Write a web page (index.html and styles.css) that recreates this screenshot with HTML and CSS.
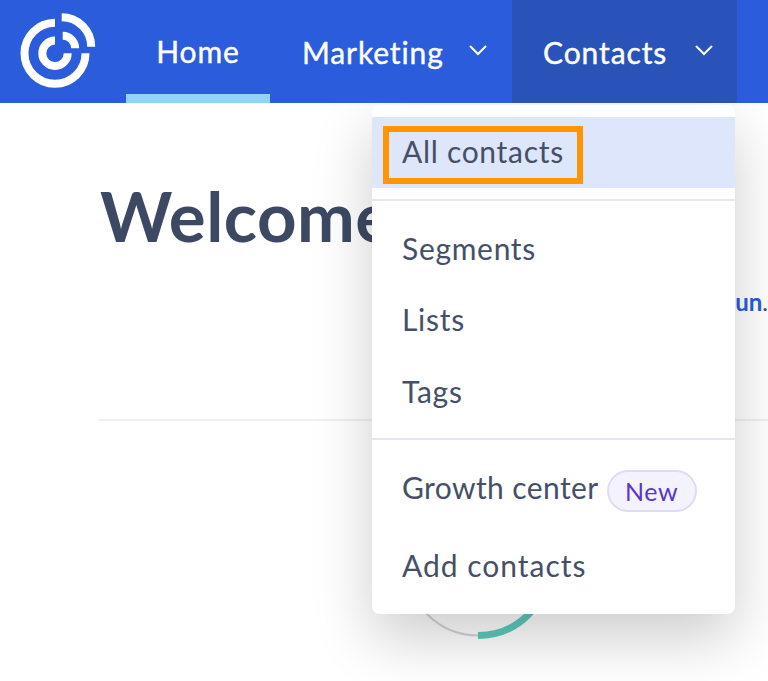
FILE: index.html
```html
<!DOCTYPE html>
<html lang="en">
<head>
    <meta charset="UTF-8">
    <meta name="viewport" content="width=device-width, initial-scale=1.0">
    <title>Welcome</title>
    <link rel="stylesheet" href="styles.css">
</head>
<body>
    <header class="topbar">
        <a class="logo" href="#">
            <svg width="78" height="78" viewBox="0 0 78 78" fill="none" stroke="#fff" stroke-width="8">
                <path d="M36 10.8 A30.5 30.5 0 1 0 66.5 41.3"/>
                <path d="M42.7 5.2 A29.5 29.5 0 0 1 72.2 34.7"/>
                <path d="M36 28.6 A12.7 12.7 0 1 0 48.7 41.3"/>
                <path d="M43.7 23.8 A12.5 12.5 0 0 1 56.2 36.3"/>
            </svg>
        </a>
        <nav class="nav">
            <a class="nav-item nav-home" href="#">Home</a>
            <a class="nav-item nav-marketing" href="#">Marketing
                <svg class="chevron" width="20" height="12" viewBox="0 0 20 12"><path d="M2 2 L10 10 L18 2"/></svg>
            </a>
            <a class="nav-item nav-contacts" href="#">Contacts
                <svg class="chevron" width="20" height="12" viewBox="0 0 20 12"><path d="M2 2 L10 10 L18 2"/></svg>
            </a>
        </nav>
    </header>

    <main class="content">
        <h1>Welcome</h1>
        <p class="intro"><a href="#">un</a>.</p>
        <hr class="rule">
        <div class="progress">
            <svg width="170" height="170" viewBox="0 0 170 170" fill="none">
                <circle cx="85" cy="85" r="71.5" stroke="#d5d5d5" stroke-width="2"/>
                <path d="M85 156.5 A71.5 71.5 0 0 0 156.5 85" stroke="#5ccbbd" stroke-width="7"/>
            </svg>
        </div>
    </main>

    <div class="menu">
        <div class="menu-group menu-first">
            <div class="menu-active"><span class="callout">All contacts</span></div>
        </div>
        <div class="menu-group menu-middle">
            <a class="menu-item" href="#">Segments</a>
            <a class="menu-item" href="#">Lists</a>
            <a class="menu-item" href="#">Tags</a>
        </div>
        <div class="menu-group menu-last">
            <a class="menu-item menu-growth" href="#">Growth center <span class="badge">New</span></a>
            <a class="menu-item menu-add" href="#">Add contacts</a>
        </div>
    </div>
</body>
</html>
```

FILE: styles.css
```css
html, body {
    height: 100%;
}
body {
    font-family: 'Lato', 'Open Sans', sans-serif;
    background-color: #fff;
    color: #454f68;
    margin: 0;
    overflow: hidden;
    position: relative;
}
a {
    color: inherit;
    text-decoration: none;
}
.topbar {
    display: flex;
    height: 103px;
    background-color: #2a5cdb;
    position: relative;
    z-index: 3;
}
.logo {
    display: block;
    width: 126px;
    padding: 12px 0 0 19px;
    box-sizing: border-box;
}
.nav {
    display: flex;
}
.nav-item {
    display: flex;
    align-items: center;
    color: #fff;
    font-size: 30px;
    letter-spacing: 0.9px;
    -webkit-text-stroke: 0.4px #fff;
    box-sizing: border-box;
}
.nav-home {
    justify-content: center;
    width: 144px;
    border-bottom: 9px solid #8fd4fb;
    padding-top: 9px;
    padding-bottom: 1px;
}
.nav-marketing {
    width: 242px;
    padding-left: 32px;
    gap: 24px;
}
.nav-contacts {
    width: 225px;
    padding-left: 31px;
    gap: 27px;
    background-color: #2953b8;
}
.chevron {
    fill: none;
    stroke: #fff;
    stroke-width: 2;
    margin-top: -4px;
}
.content {
    padding-left: 99px;
}
h1 {
    font-size: 69px;
    font-weight: 700;
    line-height: 80px;
    margin: 73px 0 0;
    padding-left: 1px;
    letter-spacing: 0.5px;
    color: #3d4963;
}
.intro {
    font-size: 24px;
    line-height: 30px;
    text-align: right;
    margin: 31px 0 0;
    color: #3d4963;
}
.intro a {
    color: #2a5cdb;
    font-weight: 700;
}
.rule {
    border: none;
    border-top: 2px solid #eef0f2;
    margin: 102px 0 0;
}
.progress {
    display: flex;
    justify-content: center;
    margin: 58px 0 0 209px;
    width: 340px;
}
.menu {
    position: absolute;
    left: 372px;
    top: 105px;
    width: 363px;
    height: 509px;
    background: #fff;
    border-radius: 8px;
    box-shadow: 0 24px 60px rgba(0, 0, 0, 0.2);
    font-size: 30px;
    letter-spacing: 0.7px;
    z-index: 2;
}
.menu-group {
    box-sizing: border-box;
}
.menu-first {
    padding: 12px 0 11px;
    border-bottom: 2px solid #e6e6f3;
    height: 96px;
}
.menu-middle {
    padding: 11px 0;
    border-bottom: 2px solid #e6e6f3;
    height: 239px;
}
.menu-last {
    padding-top: 8px;
}
.menu-active {
    display: flex;
    align-items: center;
    height: 71px;
    background-color: #dde6fa;
    padding-left: 11px;
}
.callout {
    display: flex;
    align-items: center;
    height: 58px;
    box-sizing: border-box;
    border: 6px solid #ff9500;
    padding: 0 13px 8px;
    margin-top: 4px;
}
.menu-item {
    display: flex;
    align-items: center;
    height: 71.5px;
    padding-left: 30px;
    gap: 8px;
}
.menu-last .menu-item {
    height: 78px;
}
.menu-growth {
    letter-spacing: 0.4px;
}
.menu-add {
    letter-spacing: 1px;
}
.badge {
    display: flex;
    align-items: center;
    justify-content: center;
    width: 90px;
    height: 42px;
    margin-top: 8px;
    box-sizing: border-box;
    border: 2px solid #e0daf5;
    border-radius: 21px;
    background-color: #f4f2fd;
    color: #5b34c8;
    font-size: 25px;
    letter-spacing: 0.5px;
}
```
